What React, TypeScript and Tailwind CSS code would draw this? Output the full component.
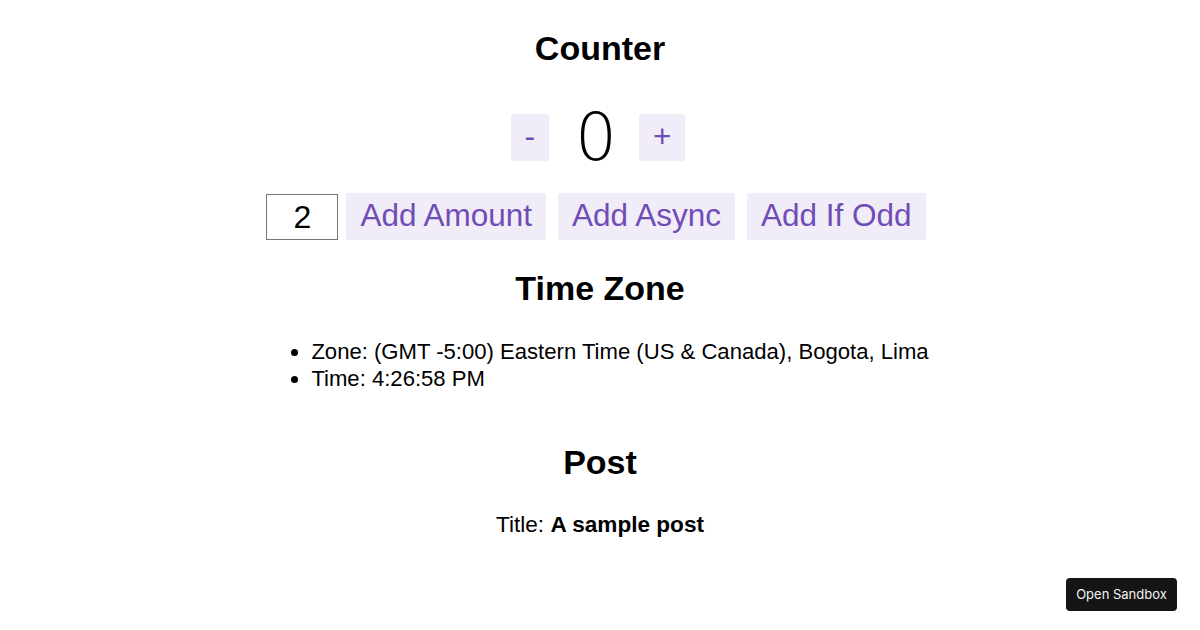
import { useState } from 'react';

const btn =
  'h-[47px] px-3 pb-[2px] text-[31.5px] leading-none text-[#704cb6] bg-[#f1edf8] rounded-[2px] border-2 border-transparent';

function Counter() {
  const [count, setCount] = useState(0);
  const [amount, setAmount] = useState('2');
  const inc = Number(amount) || 0;

  return (
    <div className="flex flex-col items-center">
      <h2 className="text-[34px] font-bold mt-[29px] leading-[39px]">Counter</h2>

      {/* value row */}
      <div className="flex items-center justify-center mt-[46px]">
        <button className={`${btn} ml-1 mr-2`} onClick={() => setCount(count - 1)}>
          -
        </button>
        <span className="text-[66px] leading-[47px] px-[18px] font-['DejaVu_Sans',sans-serif] font-extralight">
          {count}
        </span>
        <button className={`${btn} ml-1 mr-2`} onClick={() => setCount(count + 1)}>
          +
        </button>
      </div>

      {/* amount row */}
      <div className="flex items-center justify-center mt-[32px]">
        <input
          className="w-[72px] h-[46px] p-[2px] text-[32px] text-center border border-[#767676] mr-1 outline-none"
          value={amount}
          onChange={(e) => setAmount(e.target.value)}
        />
        <button className={`${btn} ml-1 mr-2`} onClick={() => setCount(count + inc)}>
          Add Amount
        </button>
        <button className={`${btn} ml-1 mr-2`} onClick={() => setTimeout(() => setCount((c) => c + inc), 1000)}>
          Add Async
        </button>
        <button className={`${btn} ml-1 mr-2`} onClick={() => count % 2 && setCount(count + inc)}>
          Add If Odd
        </button>
      </div>
    </div>
  );
}

function TimeZone() {
  return (
    <div className="flex flex-col items-center">
      <h2 className="text-[34px] font-bold mt-[29px] leading-[39px]">Time Zone</h2>
      <ul className="w-fit list-disc pl-10 mt-[30px] text-[22.1px] leading-[27px]">
        <li>Zone: (GMT -5:00) Eastern Time (US &amp; Canada), Bogota, Lima</li>
        <li>Time: 4:26:58 PM</li>
      </ul>
    </div>
  );
}

function Post() {
  return (
    <div className="flex flex-col items-center">
      <h2 className="text-[34px] font-bold mt-[51px] leading-[39px]">Post</h2>
      <p className="text-[22.6px] leading-[27px] mt-[29px]">
        Title: <strong className="font-bold">A sample post</strong>
      </p>
    </div>
  );
}

export default function App() {
  return (
    <div className="relative w-[1200px] h-[630px] bg-white text-black font-['Liberation_Sans',Arial,sans-serif] overflow-hidden">
      <Counter />
      <TimeZone />
      <Post />
      <button className="absolute right-[23px] bottom-[19px] w-[111px] h-[33px] rounded-[4px] bg-[#151515] text-[#f2f2f2] text-[13px] font-['Inter',sans-serif]">
        Open Sandbox
      </button>
    </div>
  );
}
